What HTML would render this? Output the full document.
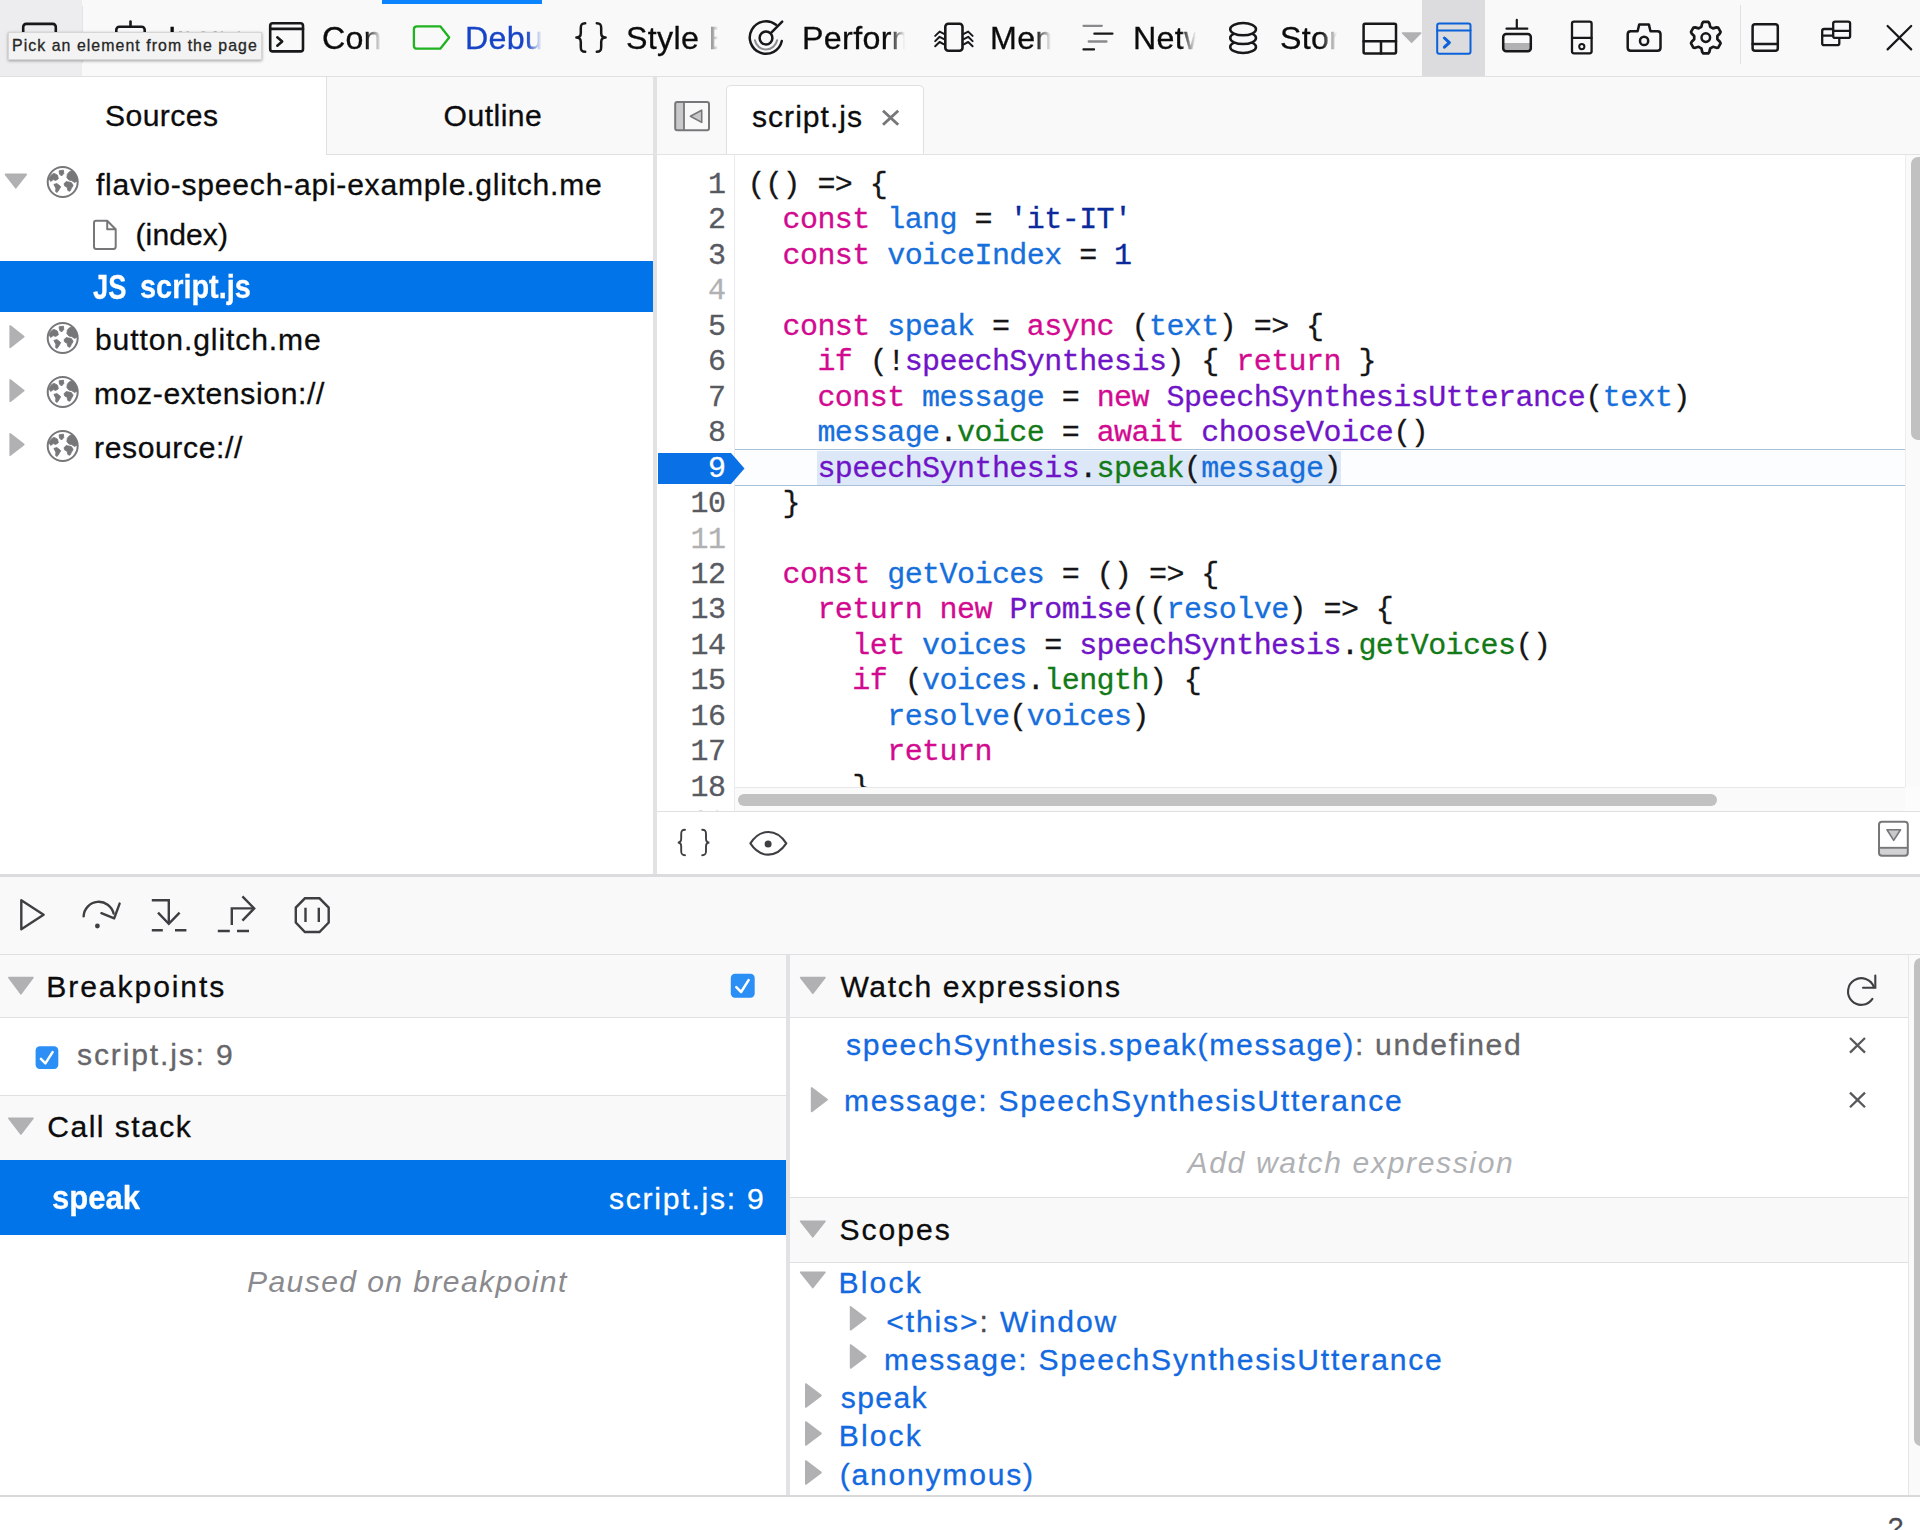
<!DOCTYPE html>
<html><head><meta charset="utf-8"><title>Debugger</title>
<style>
html,body{margin:0;padding:0}
body{width:1920px;height:1530px;position:relative;overflow:hidden;background:#fff;font-family:"Liberation Sans", sans-serif;}
.r{position:absolute;display:block}
.t{position:absolute;white-space:pre;line-height:1;font-family:"Liberation Sans", sans-serif;z-index:8;-webkit-text-stroke:0.3px currentColor}
.tab{overflow:hidden;-webkit-mask-image:linear-gradient(to right,#000 calc(100% - 15px),transparent 100%);mask-image:linear-gradient(to right,#000 calc(100% - 15px),transparent 100%);padding-left:2px;box-sizing:border-box;height:40px;}
.c{position:absolute;white-space:pre;line-height:1;font-family:"Liberation Mono", monospace;font-size:30.0px;color:#161618;z-index:1;-webkit-text-stroke:0.3px currentColor}
.ln{text-align:right}
.i{position:absolute;display:block;overflow:visible;z-index:7}
</style></head>
<body>
<div class="r" style="left:0px;top:0px;width:1920px;height:76px;background:#f9f9fa;"></div>
<div class="r" style="left:0px;top:76px;width:1920px;height:1px;background:#e0e0e2;"></div>
<div class="r" style="left:0px;top:0px;width:82px;height:76px;background:#ededf0;"></div>
<div class="r" style="left:82px;top:6px;width:1px;height:57px;background:#e4e4e6;"></div>
<div class="r" style="left:382px;top:0px;width:160px;height:4px;background:#0a84ff;"></div>
<div class="r" style="left:1422px;top:0px;width:63px;height:76px;background:#dcdcde;"></div>
<div class="r" style="left:1740px;top:5px;width:1px;height:59px;background:#e0e0e2;"></div>
<div class="r" style="left:0px;top:77px;width:326px;height:78px;background:#fff;"></div>
<div class="r" style="left:326px;top:77px;width:327px;height:77px;background:#f9f9fa;border-left:1px solid #e0e0e2;border-bottom:1px solid #e0e0e2;box-sizing:content-box;width:326px;height:77px;"></div>
<div class="r" style="left:657px;top:77px;width:1263px;height:77px;background:#f9f9fa;"></div>
<div class="r" style="left:726px;top:85px;width:198px;height:70px;background:#fff;border:1px solid #e0e0e2;border-bottom:none;border-radius:5px 5px 0 0;box-sizing:border-box;"></div>
<div class="r" style="left:657px;top:154px;width:1263px;height:1.3000000000000114px;background:#e3e3e5;"></div>
<div class="r" style="left:653px;top:77px;width:4px;height:798px;background:#e2e2e4;"></div>
<div class="r" style="left:734px;top:155px;width:1px;height:656px;background:#ebebed;"></div>
<div class="r" style="left:735px;top:449px;width:1170px;height:37px;background:#fcfdff;border-top:1.5px solid #a9c0d9;border-bottom:1.5px solid #a9c0d9;box-sizing:border-box;"></div>
<div class="r" style="left:817px;top:451px;width:524px;height:33.5px;background:#dce8f7;"></div>
<svg class="r" style="left:658px;top:453px;z-index:2" width="87" height="31" viewBox="0 0 87 31"><path d="M0 0H73L86.5 15.5L73 31H0Z" fill="#0a70e6"/></svg>
<div class="r" style="left:1905px;top:155px;width:15px;height:656px;background:#fafafa;border-left:1px solid #ededed;box-sizing:border-box;"></div>
<div class="r" style="left:1911px;top:157px;width:15px;height:283px;background:#c1c1c1;border-radius:7px;"></div>
<div class="r" style="left:735px;top:787px;width:1170px;height:24px;background:#fafafa;border-top:1px solid #e8e8e8;box-sizing:border-box;z-index:4;"></div>
<div class="r" style="left:738px;top:794px;width:979px;height:12px;background:#c1c1c1;border-radius:6px;z-index:5;"></div>
<div class="r" style="left:1905px;top:787px;width:15px;height:24px;background:#fcfcfc;z-index:4;"></div>
<div class="r" style="left:657px;top:811px;width:1263px;height:1px;background:#e0e0e2;z-index:6;"></div>
<div class="r" style="left:657px;top:812px;width:1263px;height:62px;background:#fff;z-index:6;"></div>
<div class="r" style="left:0px;top:874px;width:1920px;height:3px;background:#dcdcdf;z-index:6;"></div>
<div class="r" style="left:0px;top:877px;width:1920px;height:77px;background:#f9f9fa;"></div>
<div class="r" style="left:0px;top:954px;width:1920px;height:1px;background:#e0e0e2;"></div>
<div class="r" style="left:0px;top:955px;width:786px;height:62px;background:#f9f9fa;"></div>
<div class="r" style="left:0px;top:1017px;width:786px;height:1px;background:#e0e0e2;"></div>
<div class="r" style="left:0px;top:1095px;width:786px;height:1px;background:#e0e0e2;"></div>
<div class="r" style="left:0px;top:1096px;width:786px;height:64px;background:#f9f9fa;"></div>
<div class="r" style="left:0px;top:1160px;width:786px;height:75px;background:#0074e8;"></div>
<div class="r" style="left:786px;top:955px;width:4px;height:540px;background:#e2e2e4;"></div>
<div class="r" style="left:790px;top:955px;width:1118px;height:62px;background:#f9f9fa;"></div>
<div class="r" style="left:790px;top:1017px;width:1118px;height:1px;background:#e0e0e2;"></div>
<div class="r" style="left:790px;top:1197px;width:1118px;height:1px;background:#e0e0e2;"></div>
<div class="r" style="left:790px;top:1198px;width:1118px;height:64px;background:#f9f9fa;"></div>
<div class="r" style="left:790px;top:1262px;width:1118px;height:1px;background:#e0e0e2;"></div>
<div class="r" style="left:1908px;top:955px;width:12px;height:540px;background:#fafafa;border-left:1px solid #e6e6e6;box-sizing:border-box;"></div>
<div class="r" style="left:1914px;top:958px;width:14px;height:488px;background:#c1c1c1;border-radius:7px;"></div>
<div class="r" style="left:0px;top:1495px;width:1920px;height:1.5px;background:#d9d9db;"></div>
<div class="r" style="left:0px;top:261px;width:653px;height:51px;background:#0074e8;"></div>
<div class="r" style="left:8px;top:31.5px;width:254px;height:28.5px;background:#f3f3f3;z-index:19;box-shadow:0 1px 3px rgba(0,0,0,.35);border:0.5px solid #d6d6d6;box-sizing:border-box;"></div>
<div class="c" style="left:747.60px;top:169.70px;letter-spacing:-0.553px">(() =&gt; {</div>
<div class="c ln" style="right:1194.50px;top:169.70px;letter-spacing:-0.553px;color:#585a62;">1</div>
<div class="c" style="left:747.60px;top:205.18px;letter-spacing:-0.553px">  <span style="color:#d20a90">const</span> <span style="color:#176fdb">lang</span> = <span style="color:#0a2a9c">'it-IT'</span></div>
<div class="c ln" style="right:1194.50px;top:205.18px;letter-spacing:-0.553px;color:#585a62;">2</div>
<div class="c" style="left:747.60px;top:240.66px;letter-spacing:-0.553px">  <span style="color:#d20a90">const</span> <span style="color:#176fdb">voiceIndex</span> = <span style="color:#0a2a9c">1</span></div>
<div class="c ln" style="right:1194.50px;top:240.66px;letter-spacing:-0.553px;color:#585a62;">3</div>
<div class="c ln" style="right:1194.50px;top:276.14px;letter-spacing:-0.553px;color:#b1b1b3;">4</div>
<div class="c" style="left:747.60px;top:311.62px;letter-spacing:-0.553px">  <span style="color:#d20a90">const</span> <span style="color:#176fdb">speak</span> = <span style="color:#d20a90">async</span> (<span style="color:#176fdb">text</span>) =&gt; {</div>
<div class="c ln" style="right:1194.50px;top:311.62px;letter-spacing:-0.553px;color:#585a62;">5</div>
<div class="c" style="left:747.60px;top:347.10px;letter-spacing:-0.553px">    <span style="color:#d20a90">if</span> (!<span style="color:#7014c8">speechSynthesis</span>) { <span style="color:#d20a90">return</span> }</div>
<div class="c ln" style="right:1194.50px;top:347.10px;letter-spacing:-0.553px;color:#585a62;">6</div>
<div class="c" style="left:747.60px;top:382.58px;letter-spacing:-0.553px">    <span style="color:#d20a90">const</span> <span style="color:#176fdb">message</span> = <span style="color:#d20a90">new</span> <span style="color:#7014c8">SpeechSynthesisUtterance</span>(<span style="color:#176fdb">text</span>)</div>
<div class="c ln" style="right:1194.50px;top:382.58px;letter-spacing:-0.553px;color:#585a62;">7</div>
<div class="c" style="left:747.60px;top:418.06px;letter-spacing:-0.553px">    <span style="color:#176fdb">message</span>.<span style="color:#137a18">voice</span> = <span style="color:#d20a90">await</span> <span style="color:#7014c8">chooseVoice</span>()</div>
<div class="c ln" style="right:1194.50px;top:418.06px;letter-spacing:-0.553px;color:#585a62;">8</div>
<div class="c" style="left:747.60px;top:453.54px;letter-spacing:-0.553px">    <span style="color:#7014c8">speechSynthesis</span>.<span style="color:#137a18">speak</span>(<span style="color:#176fdb">message</span>)</div>
<div class="c ln" style="right:1194.50px;top:453.54px;letter-spacing:-0.553px;color:#fff;z-index:3;">9</div>
<div class="c" style="left:747.60px;top:489.02px;letter-spacing:-0.553px">  }</div>
<div class="c ln" style="right:1194.50px;top:489.02px;letter-spacing:-0.553px;color:#585a62;">10</div>
<div class="c ln" style="right:1194.50px;top:524.50px;letter-spacing:-0.553px;color:#b1b1b3;">11</div>
<div class="c" style="left:747.60px;top:559.98px;letter-spacing:-0.553px">  <span style="color:#d20a90">const</span> <span style="color:#176fdb">getVoices</span> = () =&gt; {</div>
<div class="c ln" style="right:1194.50px;top:559.98px;letter-spacing:-0.553px;color:#585a62;">12</div>
<div class="c" style="left:747.60px;top:595.46px;letter-spacing:-0.553px">    <span style="color:#d20a90">return</span> <span style="color:#d20a90">new</span> <span style="color:#7014c8">Promise</span>((<span style="color:#176fdb">resolve</span>) =&gt; {</div>
<div class="c ln" style="right:1194.50px;top:595.46px;letter-spacing:-0.553px;color:#585a62;">13</div>
<div class="c" style="left:747.60px;top:630.94px;letter-spacing:-0.553px">      <span style="color:#d20a90">let</span> <span style="color:#176fdb">voices</span> = <span style="color:#7014c8">speechSynthesis</span>.<span style="color:#137a18">getVoices</span>()</div>
<div class="c ln" style="right:1194.50px;top:630.94px;letter-spacing:-0.553px;color:#585a62;">14</div>
<div class="c" style="left:747.60px;top:666.42px;letter-spacing:-0.553px">      <span style="color:#d20a90">if</span> (<span style="color:#176fdb">voices</span>.<span style="color:#137a18">length</span>) {</div>
<div class="c ln" style="right:1194.50px;top:666.42px;letter-spacing:-0.553px;color:#585a62;">15</div>
<div class="c" style="left:747.60px;top:701.90px;letter-spacing:-0.553px">        <span style="color:#176fdb">resolve</span>(<span style="color:#176fdb">voices</span>)</div>
<div class="c ln" style="right:1194.50px;top:701.90px;letter-spacing:-0.553px;color:#585a62;">16</div>
<div class="c" style="left:747.60px;top:737.38px;letter-spacing:-0.553px">        <span style="color:#d20a90">return</span></div>
<div class="c ln" style="right:1194.50px;top:737.38px;letter-spacing:-0.553px;color:#585a62;">17</div>
<div class="c" style="left:747.60px;top:772.86px;letter-spacing:-0.553px">      }</div>
<div class="c ln" style="right:1194.50px;top:772.86px;letter-spacing:-0.553px;color:#585a62;">18</div>
<div class="c" style="left:747.60px;top:808.34px;letter-spacing:-0.553px">    })</div>
<div class="c ln" style="right:1194.50px;top:808.34px;letter-spacing:-0.553px;color:#585a62;">19</div>
<div class="t" style="left:105.00px;top:100.52px;font-size:30.1px;color:#0c0c0d;letter-spacing:0.442px;">Sources</div>
<div class="t" style="left:443.60px;top:100.52px;font-size:30.1px;color:#0c0c0d;letter-spacing:0.464px;">Outline</div>
<div class="t" style="left:752.00px;top:102.12px;font-size:30.1px;color:#0c0c0d;letter-spacing:1.007px;">script.js</div>
<div class="t" style="left:96.00px;top:169.52px;font-size:30.1px;color:#0c0c0d;letter-spacing:0.756px;">flavio-speech-api-example.glitch.me</div>
<div class="t" style="left:135.50px;top:220.32px;font-size:30.1px;color:#0c0c0d;letter-spacing:0.089px;">(index)</div>
<div class="t" style="left:93.00px;top:269.37px;font-size:35px;color:#fff;letter-spacing:0.000px;font-weight:bold;transform:scaleX(0.7814);transform-origin:0 0;">JS</div>
<div class="t" style="left:139.71px;top:270.87px;font-size:32.4px;color:#fff;letter-spacing:0.000px;font-weight:bold;transform:scaleX(0.8920);transform-origin:0 0;">script.js</div>
<div class="t" style="left:95.00px;top:324.52px;font-size:30.1px;color:#0c0c0d;letter-spacing:0.886px;">button.glitch.me</div>
<div class="t" style="left:94.00px;top:378.52px;font-size:30.1px;color:#0c0c0d;letter-spacing:0.639px;">moz-extension://</div>
<div class="t" style="left:94.00px;top:432.52px;font-size:30.1px;color:#0c0c0d;letter-spacing:0.619px;">resource://</div>
<div class="t" style="left:46.30px;top:972.02px;font-size:30.1px;color:#0c0c0d;letter-spacing:1.913px;">Breakpoints</div>
<div class="t" style="left:77.00px;top:1040.12px;font-size:30.1px;color:#66666a;letter-spacing:1.844px;">script.js: 9</div>
<div class="t" style="left:47.30px;top:1112.02px;font-size:30.1px;color:#0c0c0d;letter-spacing:1.445px;">Call stack</div>
<div class="t" style="left:52.04px;top:1182.37px;font-size:32.4px;color:#fff;letter-spacing:0.000px;font-weight:bold;transform:scaleX(0.9583);transform-origin:0 0;">speak</div>
<div class="t" style="left:609.00px;top:1184.32px;font-size:30.1px;color:#fff;letter-spacing:1.753px;">script.js: 9</div>
<div class="t" style="left:247.00px;top:1266.82px;font-size:30.1px;color:#8a8a8e;letter-spacing:1.398px;font-style:italic;-webkit-text-stroke:0;">Paused on breakpoint</div>
<div class="t" style="left:840.40px;top:971.82px;font-size:30.1px;color:#0c0c0d;letter-spacing:1.659px;">Watch expressions</div>
<div class="t" style="left:846.00px;top:1030.12px;font-size:30.1px;color:#1269e0;letter-spacing:1.687px;"><span style="color:#1269e0">speechSynthesis.speak(message)</span><span style="color:#66666a">: undefined</span></div>
<div class="t" style="left:844.00px;top:1086.42px;font-size:30.1px;color:#1269e0;letter-spacing:1.747px;">message: SpeechSynthesisUtterance</div>
<div class="t" style="left:1187.50px;top:1147.52px;font-size:30.1px;color:#afb1b4;letter-spacing:1.622px;font-style:italic;-webkit-text-stroke:0;">Add watch expression</div>
<div class="t" style="left:839.40px;top:1214.92px;font-size:30.1px;color:#0c0c0d;letter-spacing:2.004px;">Scopes</div>
<div class="t" style="left:838.40px;top:1268.02px;font-size:30.1px;color:#1269e0;letter-spacing:2.190px;">Block</div>
<div class="t" style="left:886.30px;top:1306.82px;font-size:30.1px;color:#1269e0;letter-spacing:1.861px;"><span style="color:#1269e0">&lt;this&gt;</span><span style="color:#4a4a4f">:</span><span style="color:#1269e0"> Window</span></div>
<div class="t" style="left:884.00px;top:1345.32px;font-size:30.1px;color:#1269e0;letter-spacing:1.747px;">message: SpeechSynthesisUtterance</div>
<div class="t" style="left:840.80px;top:1382.82px;font-size:30.1px;color:#1269e0;letter-spacing:1.361px;">speak</div>
<div class="t" style="left:838.80px;top:1421.42px;font-size:30.1px;color:#1269e0;letter-spacing:2.090px;">Block</div>
<div class="t" style="left:839.80px;top:1459.52px;font-size:30.1px;color:#1269e0;letter-spacing:1.760px;">(anonymous)</div>
<div class="t" style="left:12.00px;top:37.84px;font-size:15.9px;color:#262626;letter-spacing:1.047px;z-index:20;">Pick an element from the page</div>
<div class="t tab" style="left:165.7px;top:22.24px;width:92.3px;font-size:32.2px;color:#0c0c0d;letter-spacing:0.35px;">Inspector</div>
<div class="t tab" style="left:320.0px;top:22.24px;width:61.0px;font-size:32.2px;color:#0c0c0d;letter-spacing:0.35px;">Console</div>
<div class="t tab" style="left:463.0px;top:22.24px;width:79.0px;font-size:32.2px;color:#1744c6;letter-spacing:0.35px;">Debugger</div>
<div class="t tab" style="left:624.0px;top:22.24px;width:94.0px;font-size:32.2px;color:#0c0c0d;letter-spacing:0.35px;">Style Editor</div>
<div class="t tab" style="left:800.0px;top:22.24px;width:105.0px;font-size:32.2px;color:#0c0c0d;letter-spacing:0.35px;">Performance</div>
<div class="t tab" style="left:988.0px;top:22.24px;width:63.0px;font-size:32.2px;color:#0c0c0d;letter-spacing:0.35px;">Memory</div>
<div class="t tab" style="left:1131.0px;top:22.24px;width:65.0px;font-size:32.2px;color:#0c0c0d;letter-spacing:0.35px;">Network</div>
<div class="t tab" style="left:1278.0px;top:22.24px;width:59.0px;font-size:32.2px;color:#0c0c0d;letter-spacing:0.35px;">Storage</div>
<svg class="i" style="left:0;top:0" width="1920" height="1530" viewBox="0 0 1920 1530">
<g fill="none" stroke="#18181a" stroke-width="2.6" stroke-linecap="round" stroke-linejoin="round">
<rect x="23.2" y="23.9" width="32.6" height="24" rx="3"/>
<rect x="116.3" y="26.8" width="28.4" height="23" rx="3"/><path d="M130.5 21.5V26"/>
<rect x="270.2" y="23.3" width="32.8" height="28.1" rx="2.5"/><path d="M270.2 28.9H303"/><path d="M277.3 37.2L282.2 41.5L277.3 45.8" stroke-width="2.5"/>
</g>
<path d="M417 26.3H440.3L449.2 37.5L440.3 48.7H417Q413.9 48.7 413.9 45.7V29.3Q413.9 26.3 417 26.3Z" fill="none" stroke="#1fb31f" stroke-width="2.3" stroke-linejoin="round"/>
<g fill="none" stroke="#18181a" stroke-width="2.5" stroke-linecap="round" stroke-linejoin="round">
<path d="M585.2 23.2C581.4 23.2 580.8 25 580.8 28V33C580.8 36 579.2 37.5 576.4 37.5C579.2 37.5 580.8 39 580.8 42V47C580.8 50 581.4 51.8 585.2 51.8"/>
<path d="M596.8 23.2C600.6 23.2 601.2 25 601.2 28V33C601.2 36 602.8 37.5 605.6 37.5C602.8 37.5 601.2 39 601.2 42V47C601.2 50 600.6 51.8 596.8 51.8"/>
<path d="M776.0 24.8A16.2 16.2 0 1 0 781.8 41.0"/>
<circle cx="766" cy="38" r="6.4"/>
<path d="M770.8 33.2L782.2 21.6"/>
<path d="M754.9 40.3A11.3 11.3 0 0 0 777.1 40.3" stroke="#8f8f93" stroke-width="2"/>
<rect x="945.3" y="23.8" width="17.2" height="27" rx="3" stroke-width="2.6"/>
<path d="M935.2 35.9L939.6 31.6L944 33.9" stroke-width="2"/>
<path d="M972.6 35.9L968.2 31.6L963.8 33.9" stroke-width="2"/>
<path d="M935.2 41.1L939.6 36.8L944 39.1" stroke-width="2"/>
<path d="M972.6 41.1L968.2 36.8L963.8 39.1" stroke-width="2"/>
<path d="M935.2 46.3L939.6 42.0L944 44.3" stroke-width="2"/>
<path d="M972.6 46.3L968.2 42.0L963.8 44.3" stroke-width="2"/>
<path d="M1083.5 25.8H1101.8" stroke="#8a8a8e" stroke-width="2.3"/>
<path d="M1094.4 33.7H1112.4" stroke-width="2.3"/>
<path d="M1088.7 41.5H1106.5" stroke="#8a8a8e" stroke-width="2.3"/>
<path d="M1083.5 49.4H1094" stroke-width="2.3"/>
<ellipse cx="1243.1" cy="46.9" rx="12.9" ry="6.1" fill="#f9f9fa"/>
<ellipse cx="1243.1" cy="38" rx="12.9" ry="6.1" fill="#f9f9fa"/>
<ellipse cx="1243.1" cy="29.2" rx="12.9" ry="6.1" fill="#f9f9fa"/>
<rect x="1363.6" y="23.8" width="32.4" height="29.7" rx="1.5"/><path d="M1363.6 41.3H1396M1381 41.3V53.5"/>
<path d="M1516.8 19.8V28.7M1506.5 28.7H1527.3" stroke-width="2.2"/>
<path d="M1504 43H1530V49Q1530 51 1528 51H1506Q1504 51 1504 49Z" fill="#b1b1b3" stroke="none"/>
<rect x="1503.2" y="34" width="27.6" height="17.3" rx="3"/>
<rect x="1572" y="21.7" width="19.6" height="31.6" rx="2" stroke-width="2.3"/><path d="M1572 37.9H1591.6" stroke-width="2.2"/><circle cx="1581.8" cy="46.6" r="2.6" stroke-width="2"/>
<path d="M1630.7 31.2H1637.6L1639.2 24.6H1648.9L1650.5 31.2H1657.5Q1660.5 31.2 1660.5 34.2V47.8Q1660.5 50.8 1657.5 50.8H1630.7Q1627.7 50.8 1627.7 47.8V34.2Q1627.7 31.2 1630.7 31.2Z"/><circle cx="1644.1" cy="40.9" r="4.1"/>
<path d="M1701.4 26.8 L1702.2 23.3 L1703.3 21.9 L1708.3 21.9 L1709.4 23.3 L1710.2 26.8 L1713.0 28.4 L1716.4 27.4 L1718.2 27.6 L1720.6 31.9 L1719.9 33.5 L1717.4 36.0 L1717.4 39.2 L1719.9 41.7 L1720.6 43.3 L1718.2 47.6 L1716.4 47.8 L1713.0 46.8 L1710.2 48.4 L1709.4 51.9 L1708.3 53.3 L1703.3 53.3 L1702.2 51.9 L1701.4 48.4 L1698.6 46.8 L1695.2 47.8 L1693.4 47.6 L1691.0 43.3 L1691.7 41.7 L1694.2 39.2 L1694.2 36.0 L1691.7 33.5 L1691.0 31.9 L1693.4 27.6 L1695.2 27.4 L1698.6 28.4Z" stroke-width="2.7"/><circle cx="1705.8" cy="37.6" r="4.3" stroke-width="2.5"/>
<rect x="1752.6" y="24.2" width="25.2" height="26.6" rx="2.5"/><path d="M1752.6 44H1777.8"/>
<g stroke-width="2.3"><rect x="1833.2" y="21.6" width="16.9" height="16.3" rx="2"/><path d="M1833.2 30.8H1850"/><path d="M1832 29H1824.2Q1822.2 29 1822.2 31V43.2Q1822.2 45.2 1824.2 45.2H1837.3Q1839.3 45.2 1839.3 43.2V39.2"/><path d="M1822.2 35.7H1832"/></g>
<path d="M1887.6 26L1911.2 49.4M1911.2 26L1887.6 49.4" stroke-width="2.2"/>
</g>
<polygon points="1402.5,33.0 1420.7,33.0 1411.6,42.2" fill="#b1b1b3" stroke="#b1b1b3" stroke-width="1.6" stroke-linejoin="round"/>
<g fill="none" stroke="#0b61d9" stroke-width="2" stroke-linejoin="round" stroke-linecap="round"><rect x="1437.2" y="23.6" width="33.3" height="30.2" rx="2"/><path d="M1437.2 30.6H1470.5"/><path d="M1444.4 38L1449.4 42.6L1444.4 47.2" stroke-width="3"/></g>
<polygon points="5.5,174.4 26.2,174.4 15.8,187.8" fill="#b1b1b3" stroke="#b1b1b3" stroke-width="1.6" stroke-linejoin="round"/>
<polygon points="10.2,326.0 10.2,347.4 23.8,336.7" fill="#b1b1b3" stroke="#b1b1b3" stroke-width="1.6" stroke-linejoin="round"/>
<polygon points="10.2,379.9 10.2,401.3 23.8,390.6" fill="#b1b1b3" stroke="#b1b1b3" stroke-width="1.6" stroke-linejoin="round"/>
<polygon points="10.2,433.8 10.2,455.2 23.8,444.5" fill="#b1b1b3" stroke="#b1b1b3" stroke-width="1.6" stroke-linejoin="round"/>
<g transform="translate(62.7,182)"><circle r="15" fill="#fff" stroke="#77777a" stroke-width="2"/><g fill="#77777a" stroke="#77777a" stroke-width="0.9" stroke-linejoin="round"><path d="M-13.6 -3.2C-13 -6 -11 -8 -8.5 -8.6L-5.2 -6.8L-4.4 -3.2L-7 -1.6L-9.5 -2.4L-12 -0.6Z"/><path d="M-3.6 -11.2L0.8 -11.8L1 -8.4L-1.2 -6L-3.2 -8Z"/><path d="M4.6 -7.6C6 -10.5 9 -11.6 10.4 -10.6C13 -8.2 14.6 -4.6 14.8 -1.2L12 0.4L9 -1.4L6.2 -2L4.2 -4.4Z"/><path d="M1.4 1.6L3.6 -0.4L8.6 0.6L10.4 3.2L8.6 6.6L7.2 9.2L5.2 8.6L4.4 5.2L1.8 3.8Z"/><path d="M-8.8 2.4L-5.8 1.6L-2 4.6L-3.6 7.6L-5.6 10.4L-7 9.6L-6.8 6.2Z"/></g></g>
<g transform="translate(62.7,338)"><circle r="15" fill="#fff" stroke="#77777a" stroke-width="2"/><g fill="#77777a" stroke="#77777a" stroke-width="0.9" stroke-linejoin="round"><path d="M-13.6 -3.2C-13 -6 -11 -8 -8.5 -8.6L-5.2 -6.8L-4.4 -3.2L-7 -1.6L-9.5 -2.4L-12 -0.6Z"/><path d="M-3.6 -11.2L0.8 -11.8L1 -8.4L-1.2 -6L-3.2 -8Z"/><path d="M4.6 -7.6C6 -10.5 9 -11.6 10.4 -10.6C13 -8.2 14.6 -4.6 14.8 -1.2L12 0.4L9 -1.4L6.2 -2L4.2 -4.4Z"/><path d="M1.4 1.6L3.6 -0.4L8.6 0.6L10.4 3.2L8.6 6.6L7.2 9.2L5.2 8.6L4.4 5.2L1.8 3.8Z"/><path d="M-8.8 2.4L-5.8 1.6L-2 4.6L-3.6 7.6L-5.6 10.4L-7 9.6L-6.8 6.2Z"/></g></g>
<g transform="translate(62.7,392)"><circle r="15" fill="#fff" stroke="#77777a" stroke-width="2"/><g fill="#77777a" stroke="#77777a" stroke-width="0.9" stroke-linejoin="round"><path d="M-13.6 -3.2C-13 -6 -11 -8 -8.5 -8.6L-5.2 -6.8L-4.4 -3.2L-7 -1.6L-9.5 -2.4L-12 -0.6Z"/><path d="M-3.6 -11.2L0.8 -11.8L1 -8.4L-1.2 -6L-3.2 -8Z"/><path d="M4.6 -7.6C6 -10.5 9 -11.6 10.4 -10.6C13 -8.2 14.6 -4.6 14.8 -1.2L12 0.4L9 -1.4L6.2 -2L4.2 -4.4Z"/><path d="M1.4 1.6L3.6 -0.4L8.6 0.6L10.4 3.2L8.6 6.6L7.2 9.2L5.2 8.6L4.4 5.2L1.8 3.8Z"/><path d="M-8.8 2.4L-5.8 1.6L-2 4.6L-3.6 7.6L-5.6 10.4L-7 9.6L-6.8 6.2Z"/></g></g>
<g transform="translate(62.7,446)"><circle r="15" fill="#fff" stroke="#77777a" stroke-width="2"/><g fill="#77777a" stroke="#77777a" stroke-width="0.9" stroke-linejoin="round"><path d="M-13.6 -3.2C-13 -6 -11 -8 -8.5 -8.6L-5.2 -6.8L-4.4 -3.2L-7 -1.6L-9.5 -2.4L-12 -0.6Z"/><path d="M-3.6 -11.2L0.8 -11.8L1 -8.4L-1.2 -6L-3.2 -8Z"/><path d="M4.6 -7.6C6 -10.5 9 -11.6 10.4 -10.6C13 -8.2 14.6 -4.6 14.8 -1.2L12 0.4L9 -1.4L6.2 -2L4.2 -4.4Z"/><path d="M1.4 1.6L3.6 -0.4L8.6 0.6L10.4 3.2L8.6 6.6L7.2 9.2L5.2 8.6L4.4 5.2L1.8 3.8Z"/><path d="M-8.8 2.4L-5.8 1.6L-2 4.6L-3.6 7.6L-5.6 10.4L-7 9.6L-6.8 6.2Z"/></g></g>
<path d="M96 220.8H107.2L115.7 229.2V246.8Q115.7 248.9 113.7 248.9H96Q94 248.9 94 246.8V222.8Q94 220.8 96 220.8ZM107.2 220.8V229.2H115.7" fill="none" stroke="#77777a" stroke-width="2" stroke-linejoin="round"/>
<rect x="675.2" y="102" width="9" height="28.3" fill="#c9c9cb"/>
<rect x="675.2" y="102" width="33.8" height="28.3" rx="2" fill="none" stroke="#77777a" stroke-width="2"/>
<path d="M684 102V130.3" stroke="#77777a" stroke-width="1.8"/>
<path d="M690.4 116.3L701.7 110.2V122.4Z" fill="#c9c9cb" stroke="#77777a" stroke-width="1.6" stroke-linejoin="round"/>
<path d="M883 110.8L898.2 124.8M898.2 110.8L883 124.8" stroke="#77777a" stroke-width="2.9" fill="none"/>
<g fill="none" stroke="#3f3f43" stroke-width="1.9" stroke-linecap="round" style="z-index:9">
<path d="M685 829.8C681.6 829.8 681.2 831.2 681.2 834V838.4C681.2 841 680 842.5 677.8 842.5C680 842.5 681.2 844 681.2 846.6V851C681.2 853.8 681.6 855.2 685 855.2"/>
<path d="M702.2 829.8C705.6 829.8 706 831.2 706 834V838.4C706 841 707.2 842.5 709.4 842.5C707.2 842.5 706 844 706 846.6V851C706 853.8 705.6 855.2 702.2 855.2"/>
<path d="M750.4 843.4C756 834.6 762 832 768.3 832C774.6 832 780.6 834.6 786.3 843.4C780.6 852 774.6 854.6 768.3 854.6C762 854.6 756 852 750.4 843.4Z" stroke-width="2.1" stroke-linejoin="round"/>
</g>
<circle cx="768.1" cy="843.9" r="3.5" fill="#3f3f43"/>
<path d="M1879 848H1908V853.6Q1908 855.7 1906 855.7H1881Q1879 855.7 1879 853.6Z" fill="#d2d2d4"/>
<rect x="1879" y="821.8" width="28.8" height="33.9" rx="3" fill="none" stroke="#77777a" stroke-width="2"/>
<path d="M1879 847.8H1907.8" stroke="#77777a" stroke-width="1.9"/>
<path d="M1887 829.8H1900.5L1893.7 840.4Z" fill="#c9c9cb" stroke="#77777a" stroke-width="1.6" stroke-linejoin="round"/>
<g fill="none" stroke="#3f3f43" stroke-width="2.4" stroke-linecap="round" stroke-linejoin="round">
<path d="M21.3 900.2V929.2L43.6 914.7Z"/>
<path d="M83.6 916.4A15.2 15.2 0 0 1 113.6 913.6"/>
<path d="M119.6 903.6L114.2 918.4L101.4 913.2"/>
</g>
<circle cx="97.4" cy="926" r="2.4" fill="#3f3f43"/>
<g fill="none" stroke="#3f3f43" stroke-width="2.4" stroke-linecap="butt" stroke-linejoin="miter">
<path d="M151.8 900.2H168.8V923.4"/><path d="M158 912.6L168.8 923.8L179.6 912.6"/><path d="M151.8 930.2H162.8M175 930.2H186.4"/>
<path d="M231.8 925V908.4H253.4"/><path d="M242.4 896.4L254.2 908.4L242.4 920.6"/><path d="M217.8 931H229.8M237 931H249"/>
<path d="M304.9 898.3H319.5L328.7 907.6V922.6L319.5 932H304.9L295.8 922.6V907.6Z"/><path d="M305.5 907.8V922M318.8 907.8V922"/>
</g>
<polygon points="8.8,977.6 33.0,977.6 20.9,993.8" fill="#b1b1b3" stroke="#b1b1b3" stroke-width="1.6" stroke-linejoin="round"/>
<polygon points="8.8,1118.2 33.0,1118.2 20.9,1134.0" fill="#b1b1b3" stroke="#b1b1b3" stroke-width="1.6" stroke-linejoin="round"/>
<polygon points="800.6,977.6 825.0,977.6 812.8,993.2" fill="#b1b1b3" stroke="#b1b1b3" stroke-width="1.6" stroke-linejoin="round"/>
<polygon points="800.6,1221.2 825.0,1221.2 812.8,1236.8" fill="#b1b1b3" stroke="#b1b1b3" stroke-width="1.6" stroke-linejoin="round"/>
<polygon points="800.6,1272.2 825.0,1272.2 812.8,1287.6" fill="#b1b1b3" stroke="#b1b1b3" stroke-width="1.6" stroke-linejoin="round"/>
<polygon points="811.6,1087.9 811.6,1111.5 827.2,1099.7" fill="#b1b1b3" stroke="#b1b1b3" stroke-width="1.6" stroke-linejoin="round"/>
<polygon points="850.6,1306.8 850.6,1329.8 865.8,1318.3" fill="#b1b1b3" stroke="#b1b1b3" stroke-width="1.6" stroke-linejoin="round"/>
<polygon points="850.6,1345.0 850.6,1368.0 865.8,1356.5" fill="#b1b1b3" stroke="#b1b1b3" stroke-width="1.6" stroke-linejoin="round"/>
<polygon points="805.8,1384.0 805.8,1407.0 821.0,1395.5" fill="#b1b1b3" stroke="#b1b1b3" stroke-width="1.6" stroke-linejoin="round"/>
<polygon points="805.8,1422.0 805.8,1445.0 821.0,1433.5" fill="#b1b1b3" stroke="#b1b1b3" stroke-width="1.6" stroke-linejoin="round"/>
<polygon points="805.8,1461.0 805.8,1484.0 821.0,1472.5" fill="#b1b1b3" stroke="#b1b1b3" stroke-width="1.6" stroke-linejoin="round"/>
<rect x="730.8" y="973.8" width="23.9" height="23.9" rx="4.2" fill="#2b8ff6"/>
<path d="M736.3 987.2L741.1 992.0L748.6 980.1" fill="none" stroke="#fff" stroke-width="2.5" stroke-linecap="round" stroke-linejoin="round"/>
<rect x="35.6" y="1046.2" width="22.7" height="22.7" rx="4.2" fill="#2b8ff6"/>
<path d="M40.9 1058.9L45.4 1063.4L52.6 1052.1" fill="none" stroke="#fff" stroke-width="2.5" stroke-linecap="round" stroke-linejoin="round"/>
<g fill="none" stroke="#3f3f43" stroke-width="2.1" stroke-linecap="round" stroke-linejoin="miter">
<path d="M1873.9 987.2A13.3 13.3 0 1 0 1872.4 998.9"/>
<path d="M1875.3 975.6V987.7H1863"/>
</g>
<g fill="none" stroke="#58585c" stroke-width="2.3"><path d="M1850 1038L1865 1052.6M1865 1038L1850 1052.6"/><path d="M1850 1092.6L1865 1107.2M1865 1092.6L1850 1107.2"/></g>
</svg>
<div class="t" style="left:1888px;top:1515px;font-size:27px;color:#4a4a4f">?</div>
</body></html>
